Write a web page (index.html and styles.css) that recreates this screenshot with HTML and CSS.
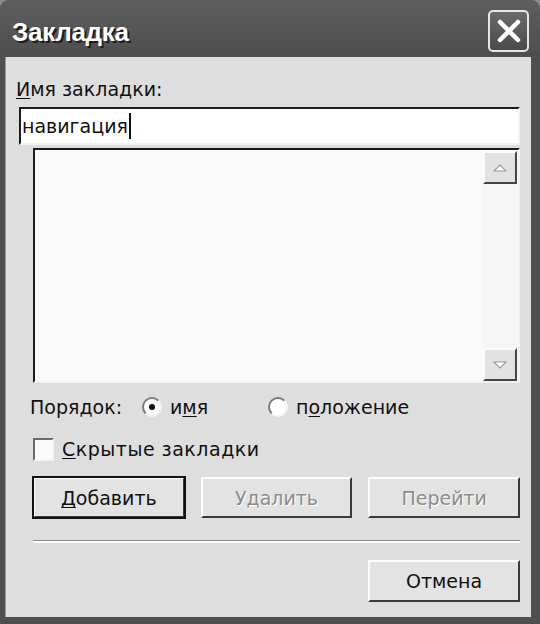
FILE: index.html
```html
<!DOCTYPE html>
<html lang="ru">
<head>
<meta charset="utf-8">
<title>Закладка</title>
<link rel="stylesheet" href="styles.css">
</head>
<body>
<div class="window">
  <div class="titlebar">
    <span class="title">Закладка</span>
    <span class="close">
      <svg width="26" height="26" viewBox="0 0 26 26"><path d="M4 4 L22 22 M22 4 L4 22" stroke="#fff" stroke-width="4.5" stroke-linecap="round"/></svg>
    </span>
  </div>
  <div class="client">
    <div class="label"><u>И</u>мя закладки:</div>
    <div class="input"><span>навигация</span><span class="caret"></span></div>
    <div class="listbox">
      <div class="list-area"></div>
      <div class="scrollbar">
        <div class="sbtn"><svg width="14" height="8" viewBox="0 0 14 8"><path d="M1 7 L7 1 L13 7 Z" fill="#fff" stroke="#9a9a9a" stroke-width="1.2"/></svg></div>
        <div class="track"></div>
        <div class="sbtn"><svg width="14" height="8" viewBox="0 0 14 8"><path d="M1 1 L7 7 L13 1 Z" fill="#fff" stroke="#9a9a9a" stroke-width="1.2"/></svg></div>
      </div>
    </div>
    <div class="order-row">
      <span class="order-label">Порядок:</span>
      <span class="opt opt-name"><span class="radio checked"></span>и<u>м</u>я</span>
      <span class="opt"><span class="radio"></span>п<u>о</u>ложение</span>
    </div>
    <div class="check-row">
      <span class="checkbox"></span><span class="check-text"><u>С</u>крытые закладки</span>
    </div>
    <div class="btn-row">
      <div class="btn default"><span><u>Д</u>обавить</span></div>
      <div class="btn disabled"><span>Удалить</span></div>
      <div class="btn disabled"><span>Перейти</span></div>
    </div>
    <div class="separator"></div>
    <div class="cancel-row">
      <div class="btn"><span>Отмена</span></div>
    </div>
  </div>
</div>
</body>
</html>
```
FILE: styles.css
```css
html, body {
  margin: 0;
  padding: 0;
  background: #8a8a8a;
}
.window {
  width: 540px;
  height: 624px;
  box-sizing: border-box;
  background: #4f4f4f;
  border-radius: 9px 9px 0 0;
  padding: 0 9px 7px 5px;
  display: flex;
  flex-direction: column;
  font-family: "DejaVu Sans", "Liberation Sans", sans-serif;
  font-size: 19px;
  color: #111;
}
.titlebar {
  height: 57px;
  flex: none;
  display: flex;
  justify-content: space-between;
  align-items: flex-start;
  background: linear-gradient(#5e5e5e, #4e4e4e);
  border-radius: 9px 9px 0 0;
  margin: 0 -9px 0 -5px;
  padding: 0 11px 0 12px;
}
.title {
  margin-top: 17px;
  font-family: "Liberation Sans", "DejaVu Sans", sans-serif;
  font-weight: bold;
  font-size: 26px;
  letter-spacing: -0.3px;
  color: #fff;
  line-height: 30px;
  text-shadow: 2px 2px 0 #1e1e1e;
}
.close {
  margin-top: 10px;
  width: 41px;
  height: 42px;
  box-sizing: border-box;
  border: 2px solid #e6e6e6;
  border-radius: 5px;
  background: linear-gradient(#6a6a6a, #4a4a4a);
  display: flex;
  align-items: center;
  justify-content: center;
}
.client {
  flex: 1;
  background: #dedede;
  border-left: 1px solid #9a9a9a;
  display: flex;
  flex-direction: column;
  padding-left: 10px;
  padding-right: 11px;
}
.label {
  margin-top: 20px;
  height: 24px;
  line-height: 24px;
}
u {
  text-decoration: underline;
  text-underline-offset: 2px;
  text-decoration-skip-ink: none;
}
.input {
  margin-top: 6px;
  margin-left: 3px;
  height: 38px;
  box-sizing: border-box;
  background: #fff;
  border-top: 2px solid #1c1c1c;
  border-left: 2px solid #1c1c1c;
  border-bottom: 2px solid #f2f2f2;
  border-right: 2px solid #f2f2f2;
  display: flex;
  align-items: center;
  padding-left: 1px;
  line-height: 24px;
}
.caret {
  display: inline-block;
  width: 2px;
  height: 26px;
  background: #111;
  margin-left: 1px;
}
.listbox {
  margin-top: 3px;
  margin-left: 17px;
  height: 235px;
  box-sizing: border-box;
  background: #fafafa;
  border-top: 2px solid #1c1c1c;
  border-left: 2px solid #1c1c1c;
  border-bottom: 2px solid #f2f2f2;
  border-right: 2px solid #f2f2f2;
  display: flex;
  padding: 1px 1px 0 0;
}
.list-area {
  flex: 1;
}
.scrollbar {
  width: 34px;
  display: flex;
  flex-direction: column;
}
.track {
  flex: 1;
  background: #f6f6f6;
}
.sbtn {
  height: 33px;
  box-sizing: border-box;
  background: #e2e2e2;
  border-top: 2px solid #fbfbfb;
  border-left: 2px solid #fbfbfb;
  border-right: 2px solid #444;
  border-bottom: 2px solid #444;
  display: flex;
  align-items: center;
  justify-content: center;
}
.order-row {
  margin-top: 12px;
  height: 24px;
  display: flex;
  align-items: center;
  padding-left: 14px;
  line-height: 24px;
}
.order-label {
  width: 112px;
}
.opt {
  display: flex;
  align-items: center;
}
.opt-name {
  width: 126px;
}
.radio {
  width: 20px;
  height: 20px;
  box-sizing: border-box;
  border-radius: 50%;
  background: #fff;
  border: 2px solid;
  border-color: #7a7a7a #f4f4f4 #f4f4f4 #7a7a7a;
  margin-right: 8px;
  display: flex;
  align-items: center;
  justify-content: center;
}
.radio.checked::after {
  content: "";
  width: 6px;
  height: 6px;
  border-radius: 50%;
  background: #111;
}
.check-row {
  margin-top: 18px;
  height: 24px;
  display: flex;
  align-items: center;
  padding-left: 17px;
  line-height: 24px;
}
.check-text {
  letter-spacing: 0.5px;
}
.checkbox {
  width: 21px;
  height: 23px;
  box-sizing: border-box;
  background: #fafafa;
  border: 2px solid;
  border-color: #6a6a6a #f4f4f4 #f4f4f4 #6a6a6a;
  margin-right: 8px;
}
.btn-row {
  margin-top: 16px;
  margin-left: 17px;
  display: flex;
  gap: 16px;
}
.btn {
  width: 152px;
  height: 42px;
  box-sizing: border-box;
  background: #e3e3e3;
  border-top: 2px solid #fdfdfd;
  border-left: 2px solid #fdfdfd;
  border-right: 2px solid #3a3a3a;
  border-bottom: 2px solid #3a3a3a;
  display: flex;
  align-items: center;
  justify-content: center;
  line-height: 24px;
}
.btn.default {
  outline: 2px solid #111;
  outline-offset: -1px;
  height: 41px;
}
.btn.disabled {
  height: 41px;
  color: #8c8c8c;
  text-shadow: 1px 1px 0 #fff;
}
.separator {
  margin-top: 22px;
  margin-left: 17px;
  height: 1px;
  background: #8e8e8e;
  border-bottom: 2px solid #fbfbfb;
}
.cancel-row {
  margin-top: 17px;
  display: flex;
  justify-content: flex-end;
}
```
